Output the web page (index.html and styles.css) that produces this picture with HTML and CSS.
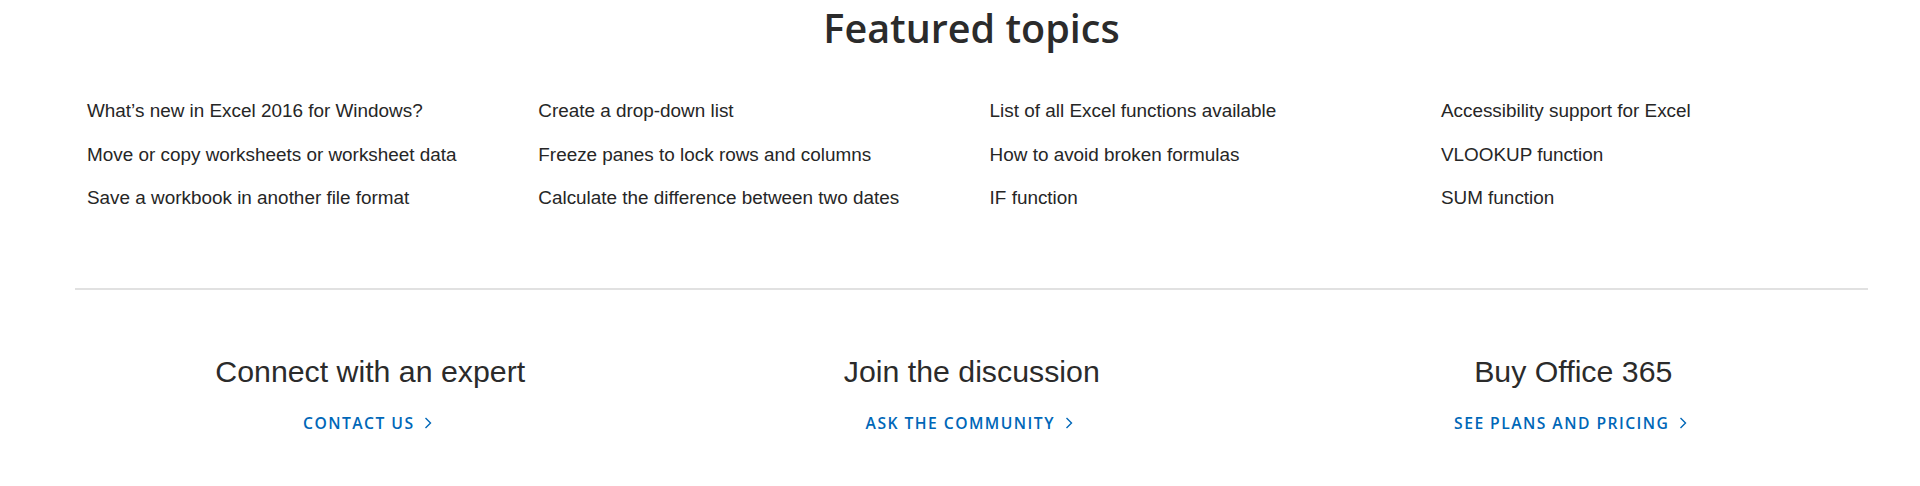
FILE: index.html
```html
<!DOCTYPE html>
<html lang="en">
<head>
<meta charset="utf-8">
<title>Featured topics</title>
<link rel="stylesheet" href="styles.css">
</head>
<body>
<main class="page">
  <section class="featured">
    <h2 class="featured-title">Featured topics</h2>
    <div class="topic-grid">
      <ul class="topic-col">
        <li><a href="#">What’s new in Excel 2016 for Windows?</a></li>
        <li><a href="#">Move or copy worksheets or worksheet data</a></li>
        <li><a href="#">Save a workbook in another file format</a></li>
      </ul>
      <ul class="topic-col">
        <li><a href="#">Create a drop-down list</a></li>
        <li><a href="#">Freeze panes to lock rows and columns</a></li>
        <li><a href="#">Calculate the difference between two dates</a></li>
      </ul>
      <ul class="topic-col">
        <li><a href="#">List of all Excel functions available</a></li>
        <li><a href="#">How to avoid broken formulas</a></li>
        <li><a href="#">IF function</a></li>
      </ul>
      <ul class="topic-col">
        <li><a href="#">Accessibility support for Excel</a></li>
        <li><a href="#">VLOOKUP function</a></li>
        <li><a href="#">SUM function</a></li>
      </ul>
    </div>
  </section>
  <section class="actions">
    <div class="action">
      <h3 class="action-title">Connect with an expert</h3>
      <a class="action-link" href="#">CONTACT US<svg class="chev" viewBox="0 0 8 12" width="8" height="12"><polyline points="1.5,1 6.5,6 1.5,11"/></svg></a>
    </div>
    <div class="action">
      <h3 class="action-title">Join the discussion</h3>
      <a class="action-link" href="#">ASK THE COMMUNITY<svg class="chev" viewBox="0 0 8 12" width="8" height="12"><polyline points="1.5,1 6.5,6 1.5,11"/></svg></a>
    </div>
    <div class="action">
      <h3 class="action-title">Buy Office 365</h3>
      <a class="action-link" href="#">SEE PLANS AND PRICING<svg class="chev" viewBox="0 0 8 12" width="8" height="12"><polyline points="1.5,1 6.5,6 1.5,11"/></svg></a>
    </div>
  </section>
</main>
</body>
</html>
```
FILE: styles.css
```css
* { box-sizing: border-box; }
html, body { margin: 0; padding: 0; background: #ffffff; }
body { color: #262626; font-family: "Liberation Sans", Arial, sans-serif; }

.page {
  width: 1793px;
  margin-left: 75px;
}

.featured-title {
  margin: 0;
  font-family: "Open Sans", "Noto Sans", sans-serif;
  font-weight: 600;
  font-size: 39.5px;
  line-height: 56px;
  text-align: center;
  color: #2b2b2b;
}

.topic-grid {
  display: grid;
  grid-template-columns: repeat(4, 451.3px);
  margin-top: 45px;
  padding-left: 12px;
  padding-bottom: 80px;
  border-bottom: 2px solid #e1e1e1;
}

.topic-col {
  list-style: none;
  margin: 0;
  padding: 0;
  display: flex;
  flex-direction: column;
  gap: 23.5px;
}

.topic-col li { line-height: 20px; font-size: 18.9px; }
.topic-col a { color: #262626; text-decoration: none; }

.actions {
  display: grid;
  grid-template-columns: repeat(3, 601.5px);
  padding-top: 64px;
  margin-left: -5.5px;
}

.action {
  display: flex;
  flex-direction: column;
  align-items: center;
}

.action-title {
  margin: 0;
  font-weight: 400;
  font-size: 30.3px;
  line-height: 36px;
  color: #2b2b2b;
}

.action-link {
  margin-top: 22.5px;
  margin-right: 5px;
  display: inline-flex;
  align-items: center;
  gap: 10px;
  font-family: "Open Sans", "Noto Sans", sans-serif;
  font-weight: 600;
  font-size: 15.7px;
  line-height: 20px;
  letter-spacing: 1.45px;
  color: #0067b8;
  text-decoration: none;
}

.chev {
  fill: none;
  stroke: #0067b8;
  stroke-width: 1.4;
}
```
